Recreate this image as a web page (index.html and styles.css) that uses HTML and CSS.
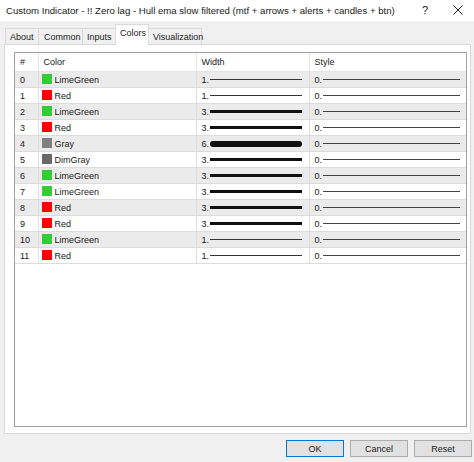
FILE: index.html
```html
<!DOCTYPE html>
<html lang="en">
<head>
    <meta charset="UTF-8">
    <title>Custom Indicator</title>
    <link rel="stylesheet" href="styles.css">
</head>
<body>

    <div class="titlebar">
        <span class="title">Custom Indicator - !! Zero lag - Hull ema slow filtered (mtf + arrows + alerts + candles + btn)</span>
        <span class="help">?</span>
        <span class="close">
            <svg width="10" height="10" viewBox="0 0 10 10"><path d="M0.5 0.5 L9.5 9.5 M9.5 0.5 L0.5 9.5" stroke="#222" stroke-width="1" fill="none"/></svg>
        </span>
    </div>

    <div class="tabs">
        <div class="tab t-about">About</div>
        <div class="tab t-common">Common</div>
        <div class="tab t-inputs">Inputs</div>
        <div class="tab t-colors active">Colors</div>
        <div class="tab t-vis">Visualization</div>
    </div>

    <div class="panel">
        <div class="list">
            <table>
                <colgroup>
                    <col class="c-num">
                    <col class="c-color">
                    <col class="c-width">
                    <col class="c-style">
                </colgroup>
                <thead>
                    <tr><th>#</th><th>Color</th><th>Width</th><th>Style</th></tr>
                </thead>
                <tbody id="rows"></tbody>
            </table>
        </div>
    </div>

    <div class="buttons">
        <button class="ok">OK</button>
        <button>Cancel</button>
        <button>Reset</button>
    </div>

    <script>
        const colors = { LimeGreen: "#32cd32", Red: "#ff0000", Gray: "#808080", DimGray: "#696969" };
        const rows = [
            ["LimeGreen", 1], ["Red", 1], ["LimeGreen", 3], ["Red", 3],
            ["Gray", 6], ["DimGray", 3], ["LimeGreen", 3], ["LimeGreen", 3],
            ["Red", 3], ["Red", 3], ["LimeGreen", 1], ["Red", 1]
        ];

        let html = "";
        rows.forEach(function (r, i) {
            html += '<tr>' +
                '<td>' + i + '</td>' +
                '<td><span class="swatch" style="background:' + colors[r[0]] + '"></span>' + r[0] + '</td>' +
                '<td><div class="cell-line"><span class="val">' + r[1] + '.</span><span class="line w' + r[1] + '"></span></div></td>' +
                '<td><div class="cell-line"><span class="val">0.</span><span class="line style"></span></div></td>' +
                '</tr>';
        });
        document.getElementById("rows").innerHTML = html;
    </script>

</body>
</html>
```

FILE: styles.css
```css
body {
    margin: 0;
    background-color: #f0f0f0;
    font-family: "Liberation Sans", Arial, sans-serif;
    font-size: 9px;
    color: #1a1a1a;
    width: 474px;
    height: 462px;
    overflow: hidden;
}

.titlebar {
    height: 21px;
    background: white;
    display: flex;
    align-items: center;
    padding-left: 6px;
    position: relative;
}

.title {
    font-size: 9.6px;
    color: #1a1a1a;
}

.help {
    position: absolute;
    left: 422px;
    top: 4px;
    font-size: 11px;
    color: #222;
}

.close {
    position: absolute;
    left: 453px;
    top: 5px;
    line-height: 0;
}

.tabs {
    display: flex;
    align-items: flex-end;
    height: 23px;
    padding-left: 5px;
}

.tab {
    height: 16px;
    line-height: 16px;
    border: 1px solid #d9d9d9;
    border-bottom: none;
    margin-right: -1px;
    padding-left: 4px;
    box-sizing: border-box;
    background: #f0f0f0;
}

.t-about { width: 34px; }
.t-common { width: 45px; padding-left: 5px; }
.t-inputs { width: 34px; }
.t-colors { width: 34px; }
.t-vis { width: 54px; }

.tab.active {
    background: white;
    height: 21px;
    line-height: 17px;
    margin-bottom: -1px;
    position: relative;
    z-index: 1;
}

.panel {
    margin-left: 4px;
    width: 467px;
    height: 390px;
    box-sizing: border-box;
    background: white;
    border: 1px solid #d9d9d9;
    padding: 7px 3px 6px 9px;
}

.list {
    height: 375px;
    border: 1px solid #a0a0a0;
    box-sizing: border-box;
    background: white;
}

table {
    border-collapse: collapse;
    width: 451px;
    table-layout: fixed;
}

.c-num { width: 23px; }
.c-color { width: 158px; }
.c-width { width: 113px; }
.c-style { width: 157px; }

th {
    height: 18px;
    font-weight: normal;
    text-align: left;
    padding: 0 0 0 5px;
    border-right: 1px solid #e5e5e5;
    border-bottom: 1px solid #e5e5e5;
}

th:last-child { border-right: none; }

td {
    height: 15px;
    padding: 0 0 0 5px;
    border-right: 1px solid #dcdcdc;
    border-bottom: 1px solid #dcdcdc;
    white-space: nowrap;
}

td:last-child { border-right: none; }

tbody tr:nth-child(odd) td {
    background: #ebebeb;
}

.swatch {
    display: inline-block;
    width: 10px;
    height: 10px;
    vertical-align: -1px;
    margin-right: 3px;
    margin-left: -2px;
}

.cell-line {
    display: flex;
    align-items: center;
}

.val {
    width: 8px;
}

.line {
    display: block;
    width: 92px;
    background: #111;
}

.line.w1 { height: 1px; background: #333; }
.line.w3 { height: 3px; }
.line.w6 { height: 6px; border-radius: 3px; }
.line.style { width: 137px; height: 1px; background: #444; }

.buttons {
    display: flex;
    justify-content: flex-end;
    gap: 6px;
    padding: 6px 2px 0 0;
}

button {
    width: 58px;
    height: 17px;
    padding: 0;
    background: #e1e1e1;
    border: 1px solid #adadad;
    font-family: "Liberation Sans", Arial, sans-serif;
    font-size: 9px;
    color: #1a1a1a;
}

button.ok {
    border-color: #0078d7;
}
```
